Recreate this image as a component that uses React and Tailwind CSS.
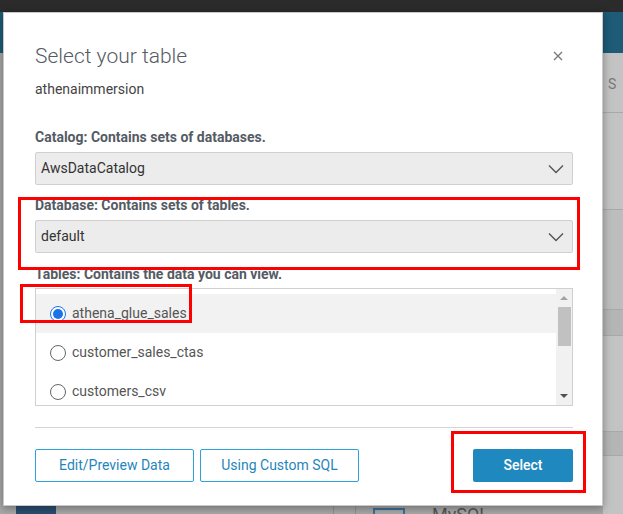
import React from "react";

const font = { fontFamily: "Roboto, 'Noto Sans', sans-serif" };

function Chevron() {
  return (
    <svg width="16" height="10" viewBox="0 0 16 10" fill="none">
      <path d="M1 1.5 L8 8.5 L15 1.5" stroke="#555" strokeWidth="1.4" />
    </svg>
  );
}

function Select({ value }) {
  return (
    <div className="flex h-[33px] w-[538px] items-center justify-between rounded-[2px] border border-[#d0d0d0] bg-[#ececec] pl-[5px] pr-[8px] text-[14px] text-[#333]">
      <span>{value}</span>
      <Chevron />
    </div>
  );
}

function Radio({ checked }) {
  return checked ? (
    <span className="flex h-[16px] w-[16px] items-center justify-center rounded-full border-[1.5px] border-[#1a73e8] bg-white">
      <span className="h-[10px] w-[10px] rounded-full bg-[#1a73e8]" />
    </span>
  ) : (
    <span className="h-[16px] w-[16px] rounded-full border border-[#666] bg-white" />
  );
}

function Row({ label, checked, highlight }) {
  return (
    <div className={`flex h-[39px] items-center gap-[6px] pl-[14px] ${highlight ? "bg-[#f2f2f2]" : ""}`}>
      <Radio checked={checked} />
      <span className="text-[14px] text-[#555]">{label}</span>
    </div>
  );
}

export default function App() {
  return (
    <div className="relative h-[514px] w-[623px] overflow-hidden bg-[#a7a7a7]" style={font}>
      {/* background page (dimmed) */}
      <div className="flex h-full flex-col">
        <div className="h-[12px] bg-[#2b2b2b]" />
        <div className="h-[41px] bg-[#1d5b77]" />
        <div className="flex flex-1">
          <div className="flex-1" />
          <div className="flex w-[20px] flex-col bg-[#c3c3c3]">
            <div className="h-[60px] border-b border-[#a9a9a9] pl-[5px] pt-[21px] text-[14px] text-[#777]">S</div>
            <div className="h-[97px] border-b border-[#a9a9a9]" />
            <div className="h-[100px] border-b border-[#a9a9a9] bg-[#bdbdbd]" />
            <div className="h-[26px] border-b border-[#a9a9a9] bg-[#b5b5b5]" />
            <div className="h-[96px] border-b border-[#a9a9a9]" />
            <div className="h-[24px] border-b border-[#a9a9a9] bg-[#b5b5b5]" />
          </div>
        </div>
      </div>
      {/* bottom strip visible below the modal */}
      <div className="absolute bottom-0 left-0 flex h-[8px] w-[603px] items-end">
        <div className="ml-[16px] h-[8px] w-[40px] bg-[#2b4d6e]" />
        <div className="ml-[277px] h-[8px] w-px bg-[#8f8f8f]" />
        <div className="ml-[21px] h-[8px] w-px bg-[#8f8f8f]" />
        <div className="ml-[17px] h-[6px] w-[32px] border-x-2 border-t-2 border-[#3b6f99]" />
        <div className="ml-[27px] h-[8px] overflow-hidden">
          <div className="text-[18px] leading-[18px] text-[#555]">MySQL</div>
        </div>
      </div>

      {/* modal */}
      <div className="absolute left-[3px] top-[12px] flex h-[494px] w-[600px] flex-col border border-[#c8c8c8] bg-white pl-[31px] shadow-[0_2px_8px_rgba(0,0,0,0.35)]">
        <div className="mt-[29px] flex items-start justify-between pr-[38px]">
          <h1 className="text-[21px] font-light leading-[28px] text-[#545b64]">Select your table</h1>
          <svg width="12" height="12" viewBox="0 0 12 12" className="mt-[8px]">
            <path d="M2 2 L10 10 M10 2 L2 10" stroke="#777" strokeWidth="1.3" />
          </svg>
        </div>
        <div className="mt-[10px] text-[14px] leading-[18px] text-[#444]">athenaimmersion</div>

        <div className="mt-[30px] text-[14px] font-bold leading-[18px] text-[#545b64]">Catalog: Contains sets of databases.</div>
        <div className="mt-[6px]">
          <Select value="AwsDataCatalog" />
        </div>

        <div className="mt-[11px] text-[14px] font-bold leading-[18px] text-[#545b64]">Database: Contains sets of tables.</div>
        <div className="mt-[6px]">
          <Select value="default" />
        </div>

        <div className="mt-[12px] text-[14px] font-bold leading-[18px] text-[#545b64]">Tables: Contains the data you can view.</div>
        <div className="mt-[5px] flex h-[118px] w-[538px] border border-[#d0d0d0]">
          <div className="flex-1 pt-[5px]">
            <Row label="athena_glue_sales" checked highlight />
            <Row label="customer_sales_ctas" />
            <Row label="customers_csv" />
          </div>
          <div className="flex w-[16px] flex-col items-center bg-[#f1f1f1]">
            <svg width="8" height="6" viewBox="0 0 8 6" className="mt-[6px]"><path d="M0 5 L4 1 L8 5 Z" fill="#a3a3a3" /></svg>
            <div className="mt-[6px] h-[39px] w-[13px] bg-[#c1c1c1]" />
            <div className="flex-1" />
            <svg width="8" height="6" viewBox="0 0 8 6" className="mb-[6px]"><path d="M0 1 L4 5 L8 1 Z" fill="#505050" /></svg>
          </div>
        </div>

        <div className="mt-[21px] h-px w-[538px] bg-[#d5d5d5]" />

        <div className="mt-[21px] flex w-[538px] items-center">
          <button className="h-[33px] w-[159px] rounded-[2px] border border-[#2ba3d9] bg-white text-[14px] text-[#1f86bc]">Edit/Preview Data</button>
          <button className="ml-[6px] h-[33px] w-[159px] rounded-[2px] border border-[#2ba3d9] bg-white text-[14px] text-[#1f86bc]">Using Custom SQL</button>
          <div className="flex-1" />
          <button className="h-[33px] w-[100px] rounded-[2px] bg-[#1f88be] text-[14px] font-medium text-white">Select</button>
        </div>
      </div>

      {/* red annotation boxes */}
      <div className="absolute left-[18px] top-[197px] h-[73px] w-[562px] border-[3px] border-[#ff0000]" />
      <div className="absolute left-[20px] top-[284px] h-[39px] w-[172px] border-[3px] border-[#ff0000]" />
      <div className="absolute left-[451px] top-[431px] h-[62px] w-[135px] border-[3px] border-[#ff0000]" />
    </div>
  );
}
